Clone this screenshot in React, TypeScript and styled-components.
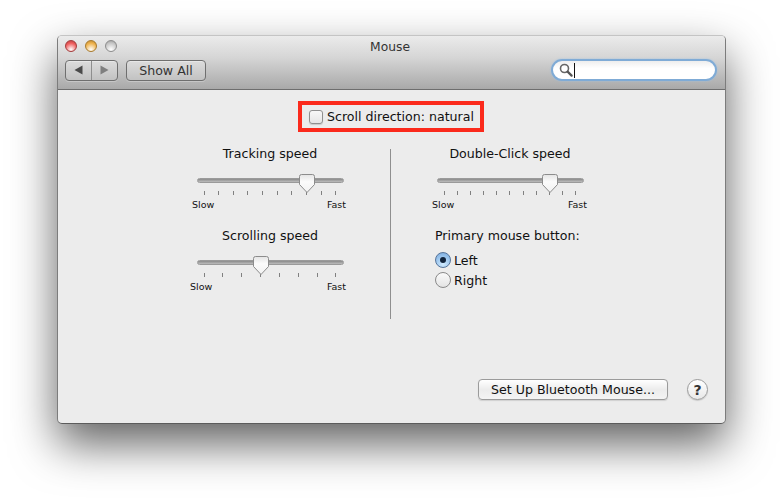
import styled, { createGlobalStyle } from "styled-components";

const GlobalStyle = createGlobalStyle`
  * { box-sizing: border-box; }
  html, body { margin: 0; height: 100%; background: #fff; overflow: hidden; }
  body { font-family: "DejaVu Sans", "Liberation Sans", sans-serif; color: #111; }
`;

const Page = styled.div`
  padding: 35px 0 0 57px;
`;

const Window = styled.div`
  width: 669px;
  height: 389px;
  display: flex;
  flex-direction: column;
  border-radius: 5px;
  background: #ececec;
  border: 1px solid #7c7c7c;
  border-top-color: #c4c4c4;
  border-bottom-color: #5c5c5c;
  box-shadow: 0 20px 45px rgba(0, 0, 0, 0.62);
`;

const Toolbar = styled.div`
  height: 54px;
  flex: none;
  padding: 3px 8px 0 7px;
  border-radius: 4px 4px 0 0;
  border-bottom: 1px solid #6e6e6e;
  background: linear-gradient(#ebebeb, #d6d6d6 40%, #a9a9a9);
`;

const TitleRow = styled.div`
  height: 14px;
  display: flex;
  align-items: center;
  position: relative;
`;

const Lights = styled.div`
  display: flex;
  gap: 8px;
`;

const Light = styled.span<{ $base: string; $dark: string }>`
  width: 12px;
  height: 12px;
  border-radius: 50%;
  border: 1px solid ${(p) => p.$dark};
  background: radial-gradient(circle at 50% 85%, #fff 0, ${(p) => p.$base} 65%, ${(p) => p.$dark} 110%);
`;

const WindowTitle = styled.div`
  position: absolute;
  top: 1px;
  left: 0;
  right: 2px;
  text-align: center;
  font-size: 12.3px;
  color: #333;
`;

const ToolRow = styled.div`
  margin-top: 6px;
  display: flex;
  align-items: center;
`;

const ToolBtn = styled.div`
  height: 21px;
  border: 1px solid #6f6f6f;
  border-radius: 4px;
  background: linear-gradient(#dcdcdc, #c2c2c2);
  box-shadow: inset 0 1px 0 rgba(255, 255, 255, 0.35), 0 1px 0 rgba(255, 255, 255, 0.25);
`;

const NavGroup = styled(ToolBtn)`
  width: 53px;
  display: flex;
  align-items: center;
`;

const NavHalf = styled.div<{ $divider?: boolean }>`
  flex: 1;
  height: 100%;
  display: flex;
  align-items: center;
  justify-content: center;
  ${(p) => (p.$divider ? "border-right: 1px solid #8e8e8e;" : "")}
`;

const ShowAll = styled(ToolBtn)`
  width: 80px;
  margin-left: 8px;
  display: flex;
  align-items: center;
  justify-content: center;
  font-size: 12.6px;
  color: #333;
`;

const SearchField = styled.div`
  margin-left: auto;
  width: 166px;
  height: 22px;
  display: flex;
  align-items: center;
  padding-left: 6px;
  border-radius: 11px;
  background: linear-gradient(#eeeeee, #ffffff 40%);
  border: 2px solid #7fabd6;
  box-shadow: 0 0 2px #9cc0e4;
`;

const Caret = styled.span`
  width: 1px;
  height: 15px;
  margin-left: 1px;
  background: #111;
`;

const Body = styled.div`
  flex: 1;
  display: flex;
  flex-direction: column;
  padding-top: 11px;
`;

const Highlight = styled.div`
  align-self: flex-start;
  margin-left: 240px;
  width: 186px;
  height: 31px;
  display: flex;
  align-items: center;
  gap: 4px;
  padding-left: 7px;
  border: 4px solid #fb2a1c;
  font-size: 12.6px;
  white-space: nowrap;
`;

const CheckBox = styled.span`
  flex: none;
  width: 14px;
  height: 14px;
  border-radius: 3px;
  border: 1px solid #8f8f8f;
  background: linear-gradient(#f8f8f8, #e6e6e6);
  box-shadow: 0 1px 1px rgba(0, 0, 0, 0.15);
`;

const Columns = styled.div`
  margin-top: 17px;
  display: flex;
  align-items: stretch;
  height: 170px;
  padding-left: 112px;
`;

const Column = styled.div`
  width: 200px;
  display: flex;
  flex-direction: column;
`;

const Divider = styled.div`
  width: 1px;
  margin: 0 19px 0 20px;
  background: #8f8f8f;
`;

const SliderBlock = styled.div`
  height: 82px;
  display: flex;
  flex-direction: column;
  align-items: center;
`;

const GroupTitle = styled.div`
  height: 10px;
  line-height: 10px;
  font-size: 12.6px;
  white-space: nowrap;
`;

const SliderArea = styled.div`
  position: relative;
  width: 147px;
  margin-top: 15px;
  padding-top: 4px;
`;

const Track = styled.div`
  height: 5px;
  border-radius: 3px;
  background: linear-gradient(#8a8a8a, #bdbdbd);
  border: 1px solid #9a9a9a;
`;

const Thumb = styled.svg`
  position: absolute;
  top: 0;
  width: 18px;
  height: 20px;
`;

const Ticks = styled.div`
  margin-top: 8px;
  padding: 0 7px;
  display: flex;
  justify-content: space-between;
`;

const Tick = styled.span`
  width: 1px;
  height: 4px;
  background: #808080;
`;

const EndLabels = styled.div<{ $left: number; $right: number }>`
  width: 160px;
  margin-top: 4px;
  padding: 0 ${(p) => p.$right}px 0 ${(p) => p.$left}px;
  display: flex;
  justify-content: space-between;
  font-size: 9.5px;
  line-height: 12px;
`;

const PrimaryTitle = styled.div`
  margin-left: 25px;
  height: 10px;
  line-height: 10px;
  font-size: 12.6px;
  white-space: nowrap;
`;

const RadioList = styled.div`
  margin: 11px 0 0 25px;
  display: flex;
  flex-direction: column;
  gap: 4px;
`;

const RadioRow = styled.div`
  height: 16px;
  display: flex;
  align-items: center;
  gap: 3px;
  font-size: 12.6px;
`;

const RadioDot = styled.span<{ $on?: boolean }>`
  width: 16px;
  height: 16px;
  border-radius: 50%;
  display: flex;
  align-items: center;
  justify-content: center;
  border: 1px solid ${(p) => (p.$on ? "#56749a" : "#8a8a8a")};
  background: ${(p) =>
    p.$on ? "radial-gradient(circle at 50% 80%, #cfeaff, #8fbce8 70%, #7aa6d6)" : "linear-gradient(#fafafa, #e4e4e4)"};
  &::after {
    content: "";
    display: ${(p) => (p.$on ? "block" : "none")};
    width: 6px;
    height: 6px;
    border-radius: 50%;
    background: #10243c;
  }
`;

const Footer = styled.div`
  margin-top: auto;
  padding: 0 17px 23px 0;
  display: flex;
  justify-content: flex-end;
  align-items: center;
  gap: 19px;
`;

const PushButton = styled.div`
  width: 190px;
  height: 21px;
  display: flex;
  align-items: center;
  justify-content: center;
  border: 1px solid #9b9b9b;
  border-radius: 4px;
  background: linear-gradient(#ffffff, #ececec 50%, #f4f4f4);
  box-shadow: 0 1px 1px rgba(0, 0, 0, 0.12);
  font-size: 12.6px;
  white-space: nowrap;
`;

const HelpButton = styled.div`
  width: 21px;
  height: 21px;
  border-radius: 50%;
  display: flex;
  align-items: center;
  justify-content: center;
  border: 1px solid #9b9b9b;
  background: linear-gradient(#ffffff, #e8e8e8);
  box-shadow: 0 1px 1px rgba(0, 0, 0, 0.15);
  font-size: 14px;
  font-weight: bold;
  color: #333;
`;

type SliderProps = {
  title: string;
  ticks: number;
  thumbX: number;
  left: number;
  right: number;
};

const Slider = ({ title, ticks, thumbX, left, right }: SliderProps) => (
  <SliderBlock>
    <GroupTitle>{title}</GroupTitle>
    <SliderArea>
      <Track />
      <Thumb viewBox="0 0 18 20" style={{ left: thumbX - 9 }}>
        <defs>
          <linearGradient id="thumbFill" x1="0" y1="0" x2="0" y2="1">
            <stop offset="0" stopColor="#e4e4e4" />
            <stop offset="0.4" stopColor="#fbfbfb" />
            <stop offset="1" stopColor="#f2f2f2" />
          </linearGradient>
        </defs>
        <path
          d="M3.5 .5H14.5Q16.5 .5 16.5 2.5V10.5L9 18.5L1.5 10.5V2.5Q1.5 .5 3.5 .5Z"
          fill="url(#thumbFill)"
          stroke="#8c8c8c"
        />
      </Thumb>
      <Ticks>
        {Array.from({ length: ticks }, (_, i) => (
          <Tick key={i} />
        ))}
      </Ticks>
    </SliderArea>
    <EndLabels $left={left} $right={right}>
      <span>Slow</span>
      <span>Fast</span>
    </EndLabels>
  </SliderBlock>
);

const App = () => (
  <>
    <GlobalStyle />
    <Page>
      <Window>
        <Toolbar>
          <TitleRow>
            <Lights>
              <Light $base="#ee5a5a" $dark="#a33a3a" />
              <Light $base="#eeb14a" $dark="#a87a2c" />
              <Light $base="#c6c6c6" $dark="#8d8d8d" />
            </Lights>
            <WindowTitle>Mouse</WindowTitle>
          </TitleRow>
          <ToolRow>
            <NavGroup>
              <NavHalf $divider>
                <svg width="9" height="10" viewBox="0 0 9 10">
                  <path d="M8.5 .5V9.5L.5 5Z" fill="#4a4a4a" />
                </svg>
              </NavHalf>
              <NavHalf>
                <svg width="9" height="10" viewBox="0 0 9 10">
                  <path d="M.5 .5V9.5L8.5 5Z" fill="#7f7f7f" />
                </svg>
              </NavHalf>
            </NavGroup>
            <ShowAll>Show All</ShowAll>
            <SearchField>
              <svg width="14" height="14" viewBox="0 0 14 14">
                <circle cx="5.5" cy="5.5" r="4" fill="none" stroke="#666" strokeWidth="1.6" />
                <path d="M8.6 8.6L12.6 12.6" stroke="#555" strokeWidth="2.2" strokeLinecap="round" />
              </svg>
              <Caret />
            </SearchField>
          </ToolRow>
        </Toolbar>
        <Body>
          <Highlight>
            <CheckBox />
            Scroll direction: natural
          </Highlight>
          <Columns>
            <Column>
              <Slider title="Tracking speed" ticks={10} thumbX={110} left={2} right={4} />
              <Slider title="Scrolling speed" ticks={8} thumbX={64} left={0} right={4} />
            </Column>
            <Divider />
            <Column>
              <Slider title="Double-Click speed" ticks={11} thumbX={113} left={2} right={3} />
              <PrimaryTitle>Primary mouse button:</PrimaryTitle>
              <RadioList>
                <RadioRow>
                  <RadioDot $on />
                  Left
                </RadioRow>
                <RadioRow>
                  <RadioDot />
                  Right
                </RadioRow>
              </RadioList>
            </Column>
          </Columns>
          <Footer>
            <PushButton>Set Up Bluetooth Mouse...</PushButton>
            <HelpButton>?</HelpButton>
          </Footer>
        </Body>
      </Window>
    </Page>
  </>
);

export default App;
